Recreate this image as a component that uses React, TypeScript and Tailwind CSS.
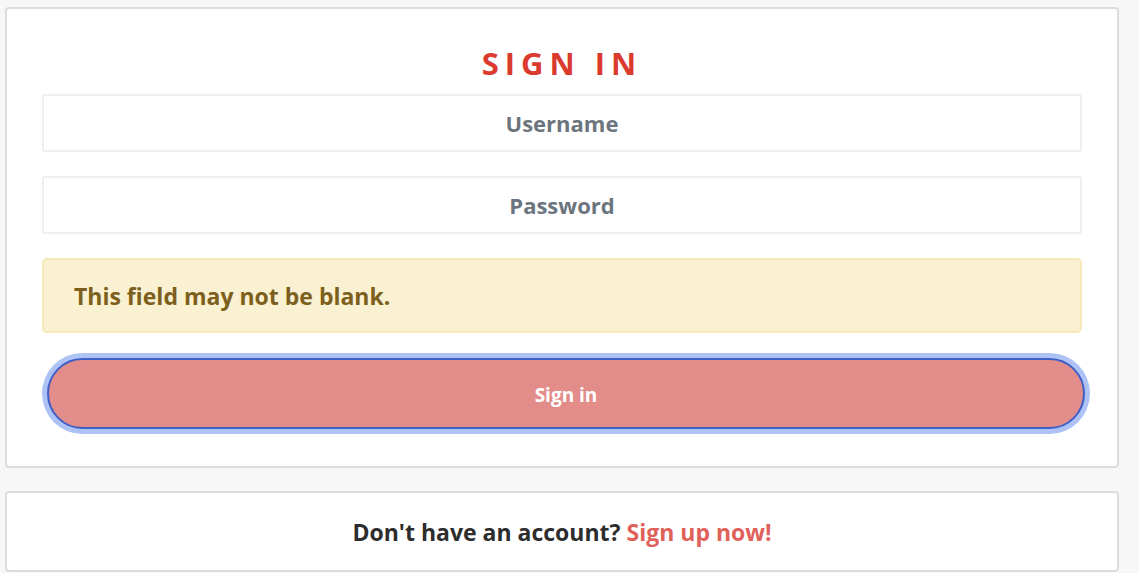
import React from "react";

const App = () => {
    return (
        <div className="min-h-[573px] bg-[#f7f7f7] pt-[7px] font-['Open_Sans',sans-serif]">
            <div className="ml-[5px] w-[1114px] rounded-[4px] border-2 border-[#dcdce0] bg-white px-[35px] pt-[34px] pb-[37px]">
                <h1 className="text-center text-[31px] leading-[40px] font-bold tracking-[6px] text-[#db3a2f]">SIGN IN</h1>
                <div className="mt-[11px] flex flex-col gap-[24px]">
                    <div className="flex h-[58px] items-center justify-center rounded-[3px] border-2 border-[#f1eef0] text-[22px] font-bold text-[#6c757d]">
                        Username
                    </div>
                    <div className="flex h-[58px] items-center justify-center rounded-[3px] border-2 border-[#f1eef0] text-[22px] font-bold text-[#6c757d]">
                        Password
                    </div>
                    <div className="flex h-[75px] items-center rounded-[5px] border-2 border-[#f6ebb8] bg-[#f9f1d1] px-[30px] pt-[2px] text-[23px] font-bold text-[#7d5f1d]">
                        This field may not be blank.
                    </div>
                </div>
                <button className="mt-[25px] ml-[5px] flex h-[71px] w-[1038px] items-center justify-center rounded-full border-2 border-[#3f5fc7] bg-[#e38d8b] pt-[3px] text-[19px] font-bold text-white ring-[5px] ring-[#aec3f5]">
                    Sign in
                </button>
            </div>
            <div className="mt-[23px] ml-[5px] flex h-[81px] w-[1114px] items-center justify-center rounded-[4px] border-2 border-[#dcdce0] bg-white pt-[2px] text-[23px] font-bold text-[#2d2d2d]">
                <span>
                    Don't have an account? <span className="text-[#e0605a]">Sign up now!</span>
                </span>
            </div>
        </div>
    );
};

export default App;
